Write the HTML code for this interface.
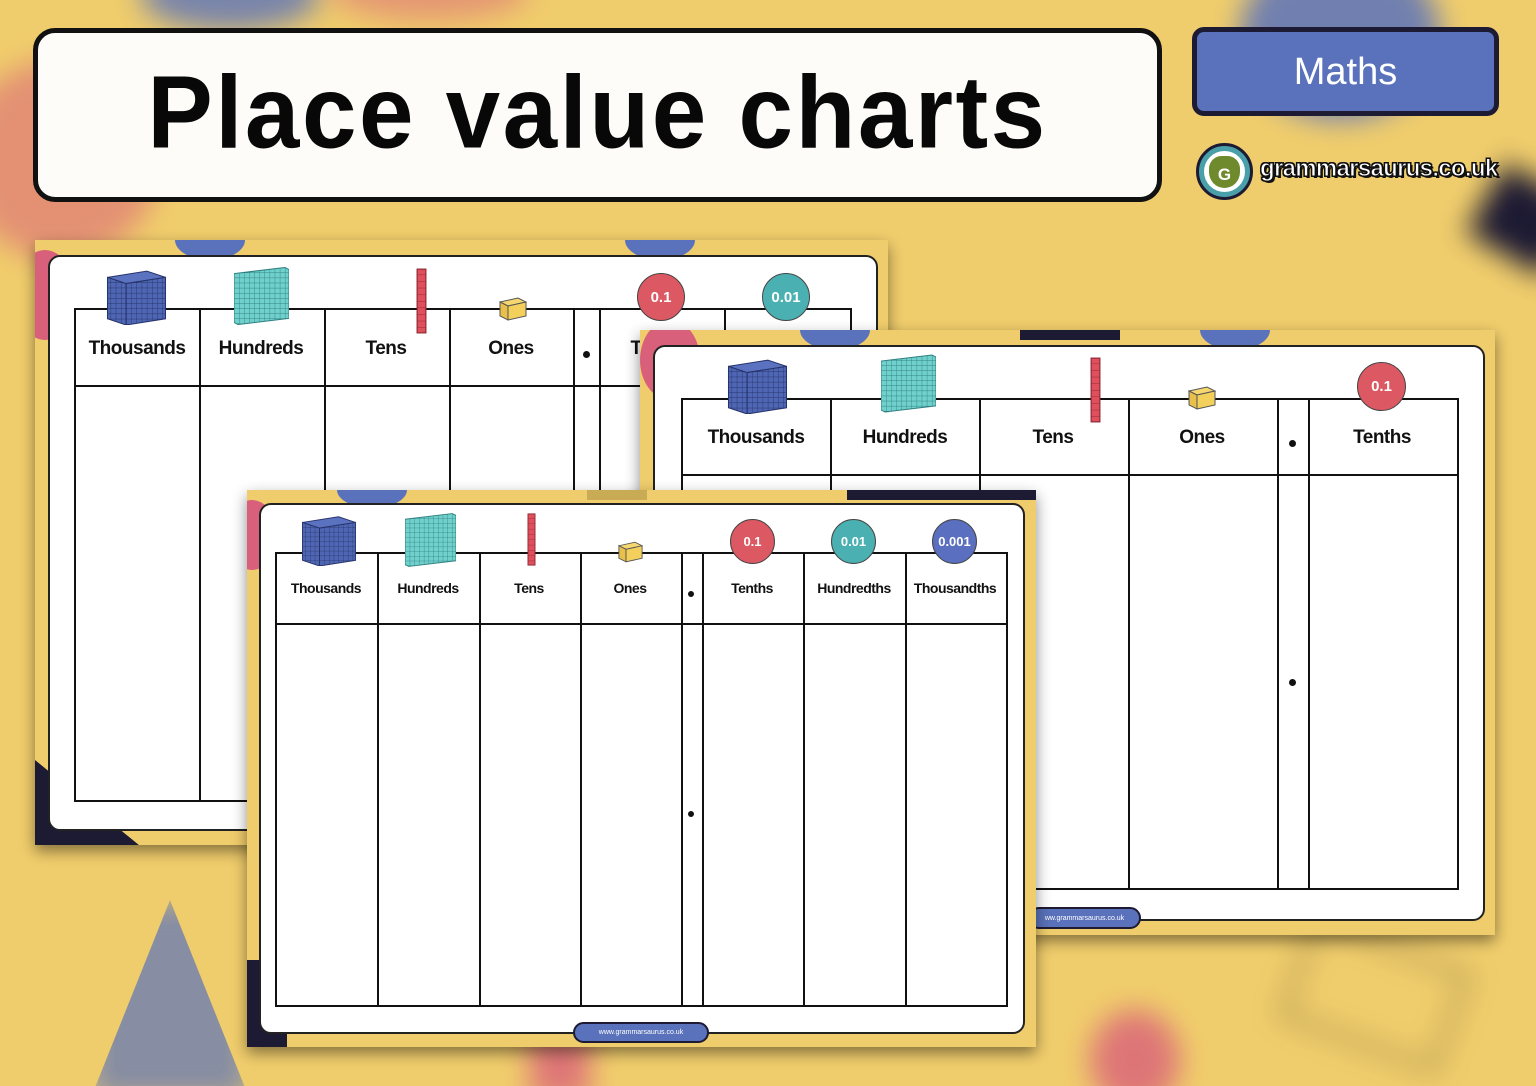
<!DOCTYPE html>
<html><head><meta charset="utf-8"><style>
*{margin:0;padding:0;box-sizing:border-box}
html{width:1536px;height:1086px;overflow:hidden}
body{width:1536px;height:1086px;overflow:hidden;background:#f0cd6c;position:relative;font-family:"Liberation Sans",sans-serif}
.a{position:absolute}
.blur{position:absolute;filter:blur(14px)}
.frame{position:absolute;background:#f0cd6c;box-shadow:0 6px 14px rgba(0,0,0,.45);overflow:hidden}
.white{position:absolute;background:#fff;border:2px solid #222;border-radius:12px}
.tbl{position:absolute;border:2px solid #111;background:#fff}
.v{position:absolute;top:0;bottom:0;width:2px;background:#111}
.h{position:absolute;left:0;right:0;height:2px;background:#111}
.lb{position:absolute;font-weight:bold;color:#111;text-align:center;transform:translateX(-50%);white-space:nowrap;letter-spacing:-0.5px}
.dot{position:absolute;width:7px;height:7px;border-radius:50%;background:#111}
.c{position:absolute;border-radius:50%;border:1.5px solid #444;color:#fff;font-weight:bold;display:flex;align-items:center;justify-content:center}
.pill{position:absolute;background:#5a72bb;border:2px solid #1d1a33;border-radius:12px;color:#fff;font-size:7px;display:flex;align-items:center;justify-content:center}
</style></head><body>
<svg width="0" height="0" style="position:absolute">
<defs>
<pattern id="gb" width="5" height="5" patternUnits="userSpaceOnUse"><rect width="5" height="5" fill="#4e66b3"/><path d="M0 0H5M0 0V5" stroke="#27346b" stroke-width=".8"/></pattern>
<pattern id="gt" width="5" height="5" patternUnits="userSpaceOnUse"><rect width="5" height="5" fill="#6fd0cc"/><path d="M0 0H5M0 0V5" stroke="#2f7f80" stroke-width=".8"/></pattern>
<pattern id="gr" width="10" height="6" patternUnits="userSpaceOnUse"><rect width="10" height="6" fill="#e0505c"/><path d="M0 0H10" stroke="#8a2630" stroke-width=".8"/></pattern>
<symbol id="cube" viewBox="0 0 60 56"><polygon points="2,10 40,4 58,10 20,16" fill="#5a72c0" stroke="#27346b"/><polygon points="2,10 20,16 20,56 2,50" fill="url(#gb)" stroke="#27346b"/><polygon points="20,16 58,10 58,50 20,56" fill="url(#gb)" stroke="#27346b"/></symbol>
<symbol id="flat" viewBox="0 0 54 56"><polygon points="0,6 50,0 54,2 54,50 4,56 0,54" fill="url(#gt)" stroke="#2f7f80"/></symbol>
<symbol id="rod" viewBox="0 0 10 60"><rect x="1" y="1" width="8" height="58" fill="url(#gr)" stroke="#8a2630"/></symbol>
<symbol id="one" viewBox="0 0 28 24"><polygon points="1,5 19,1 27,5 9,9" fill="#f6d66f" stroke="#555"/><polygon points="1,5 9,9 9,23 1,19" fill="#e8bf4a" stroke="#555"/><polygon points="9,9 27,5 27,19 9,23" fill="#f3cf5c" stroke="#555"/></symbol>
</defs></svg>

<div class="blur" style="left:-40px;top:60px;width:200px;height:200px;border-radius:50%;background:#d9607a;opacity:.55"></div>
<div class="blur" style="left:140px;top:-40px;width:180px;height:70px;border-radius:50%;background:#5a72bb;opacity:.8"></div>
<div class="blur" style="left:330px;top:-40px;width:200px;height:60px;border-radius:50%;background:#d9607a;opacity:.5"></div>
<div class="blur" style="left:1240px;top:-50px;width:200px;height:170px;border-radius:50%;background:#5a72bb;opacity:.85"></div>
<div class="blur" style="left:1480px;top:180px;width:90px;height:80px;background:#1d1a33;transform:rotate(30deg)"></div>
<div class="blur" style="left:90px;top:900px;width:160px;height:200px;background:#5a72bb;opacity:.7;clip-path:polygon(50% 0,100% 100%,0 100%)"></div>
<div class="blur" style="left:530px;top:1030px;width:60px;height:70px;background:#d9607a;opacity:.8"></div>
<div class="blur" style="left:1090px;top:1010px;width:90px;height:100px;border-radius:50%;background:#d9607a;opacity:.8"></div>
<div class="blur" style="left:1290px;top:940px;width:170px;height:110px;border:10px solid #5a5030;opacity:.35;transform:rotate(20deg)"></div>

<div class="a" style="left:33px;top:28px;width:1129px;height:174px;background:#fdfcf8;border:5px solid #111;border-radius:22px"></div>
<div class="a" style="left:33px;top:62px;width:1129px;text-align:center;font-size:98px;line-height:100px;font-weight:bold;color:#080808;letter-spacing:2.5px;transform:scaleY(1.05)">Place value charts</div>

<div class="a" style="left:1192px;top:27px;width:307px;height:89px;background:#5a72bb;border:5px solid #1d1a33;border-radius:12px;color:#fff;font-size:38px;text-align:center;line-height:80px">Maths</div>
<div class="a" style="left:1196px;top:143px;width:57px;height:57px;border-radius:50%;background:#4aa0a8;border:3px solid #1d1a33"></div>
<div class="a" style="left:1204px;top:151px;width:41px;height:41px;border-radius:50%;background:#fff"></div>
<div class="a" style="left:1209px;top:156px;width:31px;height:32px;border-radius:40% 40% 50% 50%;background:#6f8a2c;color:#fff;font-size:17px;font-weight:bold;text-align:center;line-height:38px">G</div>
<div class="a" style="left:1260px;top:155px;font-size:24px;font-weight:bold;color:#fff;letter-spacing:-0.7px;-webkit-text-stroke:1px #111;text-shadow:2px 2px 0 #111,-1px -1px 0 #111,1px -1px 0 #111,-1px 1px 0 #111">grammarsaurus.co.uk</div>

<!-- Card A -->
<div class="frame" style="left:35px;top:240px;width:853px;height:605px">
 <div class="a" style="left:140px;top:-20px;width:70px;height:40px;border-radius:50%;background:#5a72bb"></div>
 <div class="a" style="left:590px;top:-20px;width:70px;height:40px;border-radius:50%;background:#5a72bb"></div>
 <div class="a" style="left:-20px;top:10px;width:60px;height:90px;border-radius:50%;background:#d9607a"></div>
 <div class="a" style="left:0;top:520px;width:110px;height:90px;background:#1d1a33;clip-path:polygon(0 0,100% 100%,0 100%)"></div>
</div>
<div class="white" style="left:48px;top:255px;width:830px;height:576px"></div>
<div class="tbl" style="left:74px;top:308px;width:778px;height:494px">
 <div class="h" style="top:75px"></div>
 <div class="v" style="left:123px"></div><div class="v" style="left:248px"></div><div class="v" style="left:373px"></div><div class="v" style="left:497px"></div><div class="v" style="left:523px"></div><div class="v" style="left:648px"></div>
</div>
<div class="lb" style="left:137px;top:338px;font-size:19px">Thousands</div>
<div class="lb" style="left:261px;top:338px;font-size:19px">Hundreds</div>
<div class="lb" style="left:386px;top:338px;font-size:19px">Tens</div>
<div class="lb" style="left:511px;top:338px;font-size:19px">Ones</div>
<div class="lb" style="left:636px;top:338px;font-size:19px">T</div>
<div class="dot" style="left:583px;top:351px"></div>
<svg class="a" style="left:105px;top:267px" width="63" height="58"><use href="#cube"/></svg>
<svg class="a" style="left:234px;top:267px" width="55" height="58"><use href="#flat"/></svg>
<svg class="a" style="left:416px;top:267px" width="11" height="68"><use href="#rod"/></svg>
<svg class="a" style="left:499px;top:297px" width="28" height="24"><use href="#one"/></svg>
<div class="c" style="left:637px;top:273px;width:48px;height:48px;background:#dc5862;font-size:15px">0.1</div>
<div class="c" style="left:762px;top:273px;width:48px;height:48px;background:#4ab0b2;font-size:15px">0.01</div>

<!-- Card B -->
<div class="frame" style="left:640px;top:330px;width:855px;height:605px">
 <div class="a" style="left:160px;top:-20px;width:70px;height:40px;border-radius:50%;background:#5a72bb"></div>
 <div class="a" style="left:560px;top:-20px;width:70px;height:40px;border-radius:50%;background:#5a72bb"></div>
 <div class="a" style="left:0;top:-10px;width:60px;height:80px;border-radius:50%;background:#d9607a"></div>
 <div class="a" style="left:380px;top:-10px;width:100px;height:20px;background:#1d1a33"></div>
</div>
<div class="white" style="left:653px;top:345px;width:832px;height:576px"></div>
<div class="tbl" style="left:681px;top:398px;width:778px;height:492px">
 <div class="h" style="top:74px"></div>
 <div class="v" style="left:147px"></div><div class="v" style="left:296px"></div><div class="v" style="left:445px"></div><div class="v" style="left:594px"></div><div class="v" style="left:625px"></div>
</div>
<div class="lb" style="left:756px;top:427px;font-size:19px">Thousands</div>
<div class="lb" style="left:905px;top:427px;font-size:19px">Hundreds</div>
<div class="lb" style="left:1053px;top:427px;font-size:19px">Tens</div>
<div class="lb" style="left:1202px;top:427px;font-size:19px">Ones</div>
<div class="lb" style="left:1382px;top:427px;font-size:19px">Tenths</div>
<div class="dot" style="left:1289px;top:440px"></div>
<div class="dot" style="left:1289px;top:679px"></div>
<svg class="a" style="left:726px;top:356px" width="63" height="58"><use href="#cube"/></svg>
<svg class="a" style="left:881px;top:354px" width="55" height="59"><use href="#flat"/></svg>
<svg class="a" style="left:1090px;top:356px" width="11" height="68"><use href="#rod"/></svg>
<svg class="a" style="left:1188px;top:386px" width="28" height="24"><use href="#one"/></svg>
<div class="c" style="left:1357px;top:362px;width:49px;height:49px;background:#dc5862;font-size:15px">0.1</div>
<div class="pill" style="left:1028px;top:907px;width:113px;height:22px">ww.grammarsaurus.co.uk</div>

<!-- Card C -->
<div class="frame" style="left:247px;top:490px;width:789px;height:557px">
 <div class="a" style="left:90px;top:-18px;width:70px;height:36px;border-radius:50%;background:#5a72bb"></div>
 <div class="a" style="left:340px;top:-10px;width:60px;height:20px;background:#c9aa55"></div>
 <div class="a" style="left:600px;top:-10px;width:190px;height:20px;background:#1d1a33"></div>
 <div class="a" style="left:-20px;top:10px;width:50px;height:70px;border-radius:50%;background:#d9607a"></div>
 <div class="a" style="left:0;top:470px;width:40px;height:90px;background:#1d1a33"></div>
</div>
<div class="white" style="left:259px;top:503px;width:766px;height:531px"></div>
<div class="tbl" style="left:275px;top:552px;width:733px;height:455px">
 <div class="h" style="top:69px"></div>
 <div class="v" style="left:100px"></div><div class="v" style="left:202px"></div><div class="v" style="left:303px"></div><div class="v" style="left:404px"></div><div class="v" style="left:425px"></div><div class="v" style="left:526px"></div><div class="v" style="left:628px"></div>
</div>
<div class="lb" style="left:326px;top:580px;font-size:14px">Thousands</div>
<div class="lb" style="left:428px;top:580px;font-size:14px">Hundreds</div>
<div class="lb" style="left:529px;top:580px;font-size:14px">Tens</div>
<div class="lb" style="left:630px;top:580px;font-size:14px">Ones</div>
<div class="lb" style="left:752px;top:580px;font-size:14px">Tenths</div>
<div class="lb" style="left:854px;top:580px;font-size:14px">Hundredths</div>
<div class="lb" style="left:955px;top:580px;font-size:14px">Thousandths</div>
<div class="dot" style="left:688px;top:591px;width:6px;height:6px"></div>
<div class="dot" style="left:688px;top:811px;width:6px;height:6px"></div>
<svg class="a" style="left:300px;top:513px" width="58" height="53"><use href="#cube"/></svg>
<svg class="a" style="left:405px;top:513px" width="51" height="54"><use href="#flat"/></svg>
<svg class="a" style="left:527px;top:513px" width="9" height="53"><use href="#rod"/></svg>
<svg class="a" style="left:618px;top:541px" width="25" height="22"><use href="#one"/></svg>
<div class="c" style="left:730px;top:519px;width:45px;height:45px;background:#dc5862;font-size:13px">0.1</div>
<div class="c" style="left:831px;top:519px;width:45px;height:45px;background:#4ab0b2;font-size:13px">0.01</div>
<div class="c" style="left:932px;top:519px;width:45px;height:45px;background:#5a6fc0;font-size:13px">0.001</div>
<div class="pill" style="left:573px;top:1022px;width:136px;height:21px">www.grammarsaurus.co.uk</div>
</body></html>
